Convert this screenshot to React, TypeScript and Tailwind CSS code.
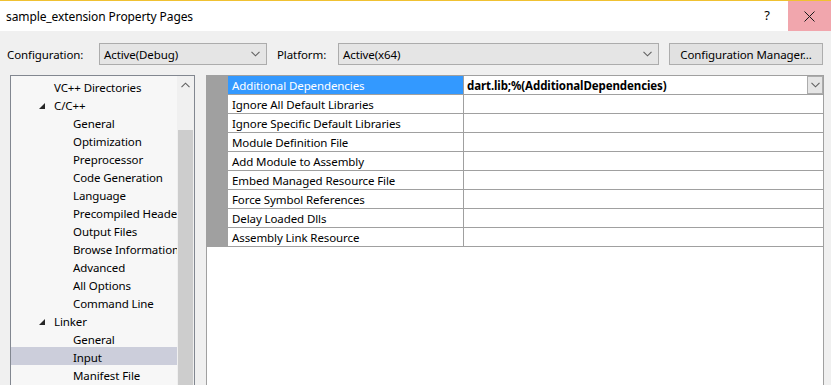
import React from 'react';

const font = { fontFamily: '"Noto Sans", "Segoe UI", sans-serif' };

type TreeItem = { label: string; level: 0 | 1; expanded?: boolean; selected?: boolean };

const treeItems: TreeItem[] = [
  { label: 'VC++ Directories', level: 0 },
  { label: 'C/C++', level: 0, expanded: true },
  { label: 'General', level: 1 },
  { label: 'Optimization', level: 1 },
  { label: 'Preprocessor', level: 1 },
  { label: 'Code Generation', level: 1 },
  { label: 'Language', level: 1 },
  { label: 'Precompiled Headers', level: 1 },
  { label: 'Output Files', level: 1 },
  { label: 'Browse Information', level: 1 },
  { label: 'Advanced', level: 1 },
  { label: 'All Options', level: 1 },
  { label: 'Command Line', level: 1 },
  { label: 'Linker', level: 0, expanded: true },
  { label: 'General', level: 1 },
  { label: 'Input', level: 1, selected: true },
  { label: 'Manifest File', level: 1 },
];

const props = [
  'Additional Dependencies',
  'Ignore All Default Libraries',
  'Ignore Specific Default Libraries',
  'Module Definition File',
  'Add Module to Assembly',
  'Embed Managed Resource File',
  'Force Symbol References',
  'Delay Loaded Dlls',
  'Assembly Link Resource',
];

const Chevron = ({ up = false }: { up?: boolean }) => (
  <svg width="9" height="6" viewBox="0 0 9 6" className={up ? 'rotate-180' : ''}>
    <path d="M0.5 0.8 L4.5 4.8 L8.5 0.8" fill="none" stroke="#606060" strokeWidth="1.1" />
  </svg>
);

const Expander = () => (
  <svg width="6" height="6" viewBox="0 0 6 6">
    <polygon points="6,0 6,6 0,6" fill="#262626" />
  </svg>
);

const Combo = ({ value, width }: { value: string; width: string }) => (
  <div className={`${width} h-[22px] flex items-center justify-between border border-[#acacac] bg-[#e5e5e5] pl-[4px] pr-[6px]`}>
    <span className="pt-[2px]">{value}</span>
    <Chevron />
  </div>
);

export default function App() {
  return (
    <div
      className="w-[831px] h-[385px] overflow-hidden bg-[#f0f0f0] flex flex-col text-[11.5px] tracking-[-0.1px] text-black"
      style={font}
    >
      {/* title bar */}
      <div className="h-[31px] bg-white border-t border-[#f0c131] flex items-stretch shrink-0">
        <div className="flex-1 flex items-center pl-[6px] pt-[1px] text-[12px]">sample_extension Property Pages</div>
        <div className="w-[42px] flex items-center justify-center text-[13px]">?</div>
        <div className="w-[43px] bg-[#f1a6ad] flex items-center justify-center">
          <svg width="11" height="11" viewBox="0 0 11 11">
            <path d="M0.5 0.5 L10.5 10.5 M10.5 0.5 L0.5 10.5" stroke="#1a1a1a" strokeWidth="1" />
          </svg>
        </div>
      </div>

      {/* configuration row */}
      <div className="flex items-center mt-[12px] h-[22px] shrink-0">
        <span className="ml-[7px] w-[92px] pt-[2px]">Configuration:</span>
        <Combo value="Active(Debug)" width="w-[168px]" />
        <span className="ml-[10px] w-[61px] pt-[2px]">Platform:</span>
        <Combo value="Active(x64)" width="w-[321px]" />
        <div className="ml-[10px] w-[154px] h-[22px] pt-[2px] border border-[#adadad] bg-[#e1e1e1] flex items-center justify-center">
          Configuration Manager...
        </div>
      </div>

      {/* main area */}
      <div className="flex mt-[10px] flex-1 min-h-0">
        {/* tree */}
        <div className="ml-[10px] w-[185px] border border-[#828790] border-b-0 bg-[#f7f7f7] flex overflow-hidden">
          <div className="flex-1 pt-[1px] overflow-hidden">
            {treeItems.map((it, i) => (
              <div
                key={i}
                className={`h-[18px] flex items-center pt-[3px] whitespace-nowrap ${it.selected ? 'bg-[#cccedb]' : ''}`}
              >
                {it.level === 0 ? (
                  <>
                    <span className="w-[43px] flex justify-end pr-[9px]">{it.expanded ? <Expander /> : null}</span>
                    <span>{it.label}</span>
                  </>
                ) : (
                  <span className="pl-[62px]">{it.label}</span>
                )}
              </div>
            ))}
          </div>
          {/* scrollbar */}
          <div className="w-[17px] bg-[#f0f0f0] flex flex-col shrink-0">
            <div className="h-[18px] flex items-center justify-center">
              <Chevron up />
            </div>
            <div className="h-[36px]" />
            <div className="flex-1 mx-[1px] bg-[#cdcdcd]" />
          </div>
        </div>

        {/* property grid */}
        <div className="ml-[11px] w-[618px] border border-[#a0a0a0] border-b-0 bg-white flex flex-col">
          {props.map((p, i) => (
            <div key={p} className="h-[19px] flex border-b border-[#a0a0a0]">
              <div className="w-[21px] bg-[#a0a0a0] shrink-0" />
              <div
                className={`w-[236px] shrink-0 flex items-center pl-[4px] pt-[2px] border-r border-[#a0a0a0] whitespace-nowrap ${
                  i === 0 ? 'bg-[#3399ff] text-white' : ''
                }`}
              >
                {p}
              </div>
              <div className="flex-1 flex items-center justify-between">
                {i === 0 ? (
                  <>
                    <span className="pl-[3px] pt-[2px] font-bold">dart.lib;%(AdditionalDependencies)</span>
                    <div className="w-[16px] h-[18px] bg-[#e5e5e5] border border-[#acacac] flex items-center justify-center">
                      <Chevron />
                    </div>
                  </>
                ) : null}
              </div>
            </div>
          ))}
        </div>
      </div>
    </div>
  );
}
